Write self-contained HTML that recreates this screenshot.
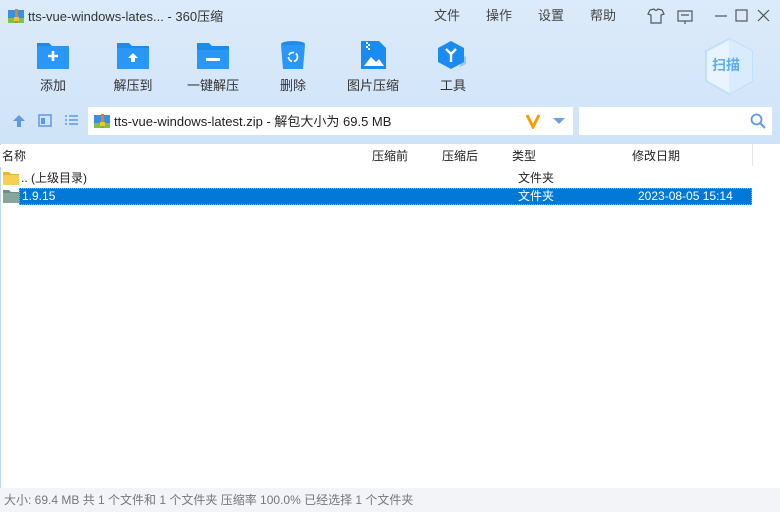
<!DOCTYPE html>
<html><head><meta charset="utf-8"><style>
*{margin:0;padding:0;box-sizing:border-box}
body{width:780px;height:512px;overflow:hidden;font-family:"Liberation Sans","Noto Sans CJK SC",sans-serif;font-size:12px;color:#222;background:#fff;position:relative}
.top{position:absolute;left:0;top:0;width:780px;height:144px;background:linear-gradient(#dcebfb,#cfe3f8)}
.a{position:absolute;white-space:nowrap;line-height:16px}
.tb{position:absolute;top:40px;width:34px;height:30px}
.lbl{position:absolute;top:78px;font-size:13px;color:#333;width:70px;text-align:center;line-height:16px}
.hdr{position:absolute;top:145px;left:0;width:780px;height:22px;background:#fff;font-size:12px}
</style></head><body>
<div class="top"></div>
<svg class="a" style="left:8px;top:8px" width="16" height="16"><rect x="0" y="2" width="16" height="12" fill="#3a8ee6"/><rect x="0" y="10" width="16" height="5" fill="#7cc34a"/><rect x="7" y="1" width="3" height="14" fill="#d08a1e"/><rect x="6" y="9" width="5" height="4" fill="#f3c23c"/></svg>
<div class="a" style="left:28px;top:9px;font-size:13px;color:#333">tts-vue-windows-lates... - 360压缩</div>
<div class="a" style="left:434px;top:8px;font-size:13px;color:#444">文件</div>
<div class="a" style="left:486px;top:8px;font-size:13px;color:#444">操作</div>
<div class="a" style="left:538px;top:8px;font-size:13px;color:#444">设置</div>
<div class="a" style="left:590px;top:8px;font-size:13px;color:#444">帮助</div>
<svg class="a" style="left:646px;top:7px" width="130" height="18" fill="none" stroke="#555" stroke-width="1.2">
<path d="M4 3 L8 2 Q10 5 12 2 L16 3 L18 7 L15 8 L15 16 L5 16 L5 8 L2 7 Z"/>
<rect x="32" y="4" width="14" height="10"/><path d="M35 8h8M39 14l0 3"/>
<path d="M69 9h12"/><rect x="90" y="3" width="11" height="11"/><path d="M112 3l11 11M123 3l-11 11"/>
</svg>
<svg class="tb" style="left:36px" viewBox="0 0 34 30"><path d="M1 3h12l3 3h17v23H1z" fill="#1a8cf0"/><path d="M1 6h32v23H1z" fill="#2a96f5"/><path d="M17 11v10M12 16h10" stroke="#fff" stroke-width="2.6"/></svg>
<svg class="tb" style="left:116px" viewBox="0 0 34 30"><path d="M1 3h12l3 3h17v23H1z" fill="#1a8cf0"/><path d="M1 8h32v21H1z" fill="#2a96f5"/><path d="M17 13l-5 5h3v4h4v-4h3z" fill="#fff"/></svg>
<svg class="tb" style="left:196px" viewBox="0 0 34 30"><path d="M1 3h12l3 3h17v23H1z" fill="#1a8cf0"/><path d="M1 10h32v19H1z" fill="#2a96f5"/><rect x="10" y="18" width="14" height="3" fill="#fff"/></svg>
<svg class="tb" style="left:276px" viewBox="0 0 34 30"><ellipse cx="17" cy="4" rx="12" ry="3" fill="#1a8cf0"/><path d="M5 5h24l-2 24H7z" fill="#2a96f5"/><circle cx="17" cy="17" r="4.5" fill="none" stroke="#fff" stroke-width="1.8" stroke-dasharray="6 2"/></svg>
<svg class="tb" style="left:356px" viewBox="0 0 34 30"><path d="M5 1h18l7 7v21H5z" fill="#1a8cf0"/><path d="M10 2h2v2h-2zM12 4h2v2h-2zM10 6h2v2h-2zM12 8h2v2h-2z" fill="#fff"/><path d="M8 26l7-9 5 5 3-3 5 7z" fill="#fff"/></svg>
<svg class="tb" style="left:436px" viewBox="0 0 34 30"><path d="M24 14l6 3v7l-6 3z" fill="#8ec8f8"/><path d="M15 1l13 7v14l-13 7-13-7V8z" fill="#1a8cf0"/><path d="M10 9l5 5 5-5M15 14v8" stroke="#fff" stroke-width="2.4" fill="none"/></svg>
<div class="lbl" style="left:18px">添加</div>
<div class="lbl" style="left:98px">解压到</div>
<div class="lbl" style="left:178px">一键解压</div>
<div class="lbl" style="left:258px">删除</div>
<div class="lbl" style="left:338px">图片压缩</div>
<div class="lbl" style="left:418px">工具</div>
<svg class="a" style="left:703px;top:37px" width="52" height="60"><path d="M26 2l23 12v30l-23 13-23-13V14z" fill="#eaf4fe" stroke="#bfe0fb" stroke-width="2"/><path d="M26 2v55l23-13V14z" fill="#d9ecfd"/></svg>
<div class="a" style="left:712px;top:57px;font-size:14px;font-weight:bold;color:#5aaef0">扫描</div>
<svg class="a" style="left:12px;top:114px" width="70" height="14"><path d="M7 1l6 6H9v6H5V7H1z" fill="#5b9ae6"/><rect x="27" y="1" width="12" height="11" fill="none" stroke="#5b9ae6" stroke-width="1.5"/><rect x="29" y="4" width="4" height="6" fill="#5b9ae6"/><path d="M53 2h2M53 6h2M53 10h2M57 2h9M57 6h9M57 10h9" stroke="#5b9ae6" stroke-width="1.6"/></svg>
<div class="a" style="left:88px;top:107px;width:485px;height:28px;background:#fff"></div>
<svg class="a" style="left:94px;top:113px" width="16" height="16"><rect x="0" y="2" width="16" height="12" fill="#3a8ee6"/><rect x="0" y="10" width="16" height="5" fill="#7cc34a"/><rect x="7" y="1" width="3" height="14" fill="#d08a1e"/><rect x="6" y="9" width="5" height="4" fill="#f3c23c"/></svg>
<div class="a" style="left:114px;top:114px;font-size:13px;color:#222">tts-vue-windows-latest.zip - 解包大小为 69.5 MB</div>
<svg class="a" style="left:526px;top:113px" width="42" height="16"><path d="M1 2l6 12 6-12" stroke="#f5a000" stroke-width="3" fill="none"/><path d="M27 5h12l-6 6z" fill="#6c9fe0"/></svg>
<div class="a" style="left:579px;top:107px;width:193px;height:28px;background:#fff"></div>
<svg class="a" style="left:750px;top:113px" width="16" height="16"><circle cx="6.5" cy="6.5" r="5" fill="none" stroke="#5b9ae6" stroke-width="1.8"/><path d="M10 10l5 5" stroke="#5b9ae6" stroke-width="2"/></svg>
<div class="a" style="left:0;top:144px;width:1px;height:344px;background:#bcd7f3"></div>
<div class="hdr"></div>
<div class="a" style="left:2px;top:148px">名称</div>
<div class="a" style="left:372px;top:148px">压缩前</div>
<div class="a" style="left:442px;top:148px">压缩后</div>
<div class="a" style="left:512px;top:148px">类型</div>
<div class="a" style="left:632px;top:148px">修改日期</div>
<div class="a" style="left:752px;top:144px;width:1px;height:22px;background:#e5e5e5"></div>
<svg class="a" style="left:3px;top:171px" width="16" height="14"><path d="M0 1h6l2 2h8v11H0z" fill="#e8b730"/><path d="M0 4h16v10H0z" fill="#f7cf52"/></svg>
<div class="a" style="left:21px;top:170px">.. (上级目录)</div>
<div class="a" style="left:518px;top:170px">文件夹</div>
<div class="a" style="left:19px;top:188px;width:733px;height:17px;background:#0078d7;outline:1px dotted #e0a060;outline-offset:-1px"></div>
<svg class="a" style="left:3px;top:189px" width="16" height="14"><path d="M0 1h6l2 2h8v11H0z" fill="#6f8f86"/><path d="M0 4h16v10H0z" fill="#87a59d"/></svg>
<div class="a" style="left:22px;top:188px;color:#fff">1.9.15</div>
<div class="a" style="left:518px;top:188px;color:#fff">文件夹</div>
<div class="a" style="left:638px;top:188px;color:#fff">2023-08-05 15:14</div>
<div class="a" style="left:0;top:488px;width:780px;height:24px;background:#f2f4f8"></div>
<div class="a" style="left:4px;top:492px;color:#777">大小: 69.4 MB 共 1 个文件和 1 个文件夹 压缩率 100.0% 已经选择 1 个文件夹</div>
</body></html>
